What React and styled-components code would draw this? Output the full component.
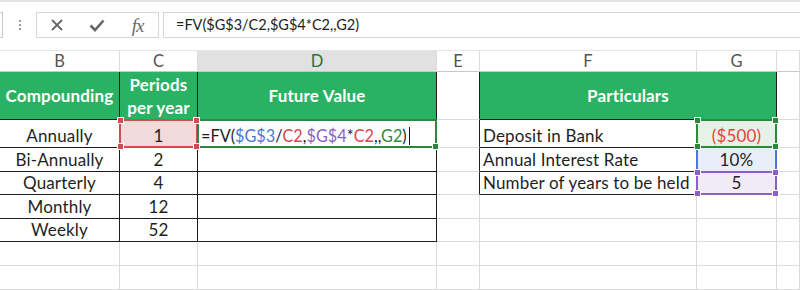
import React from 'react';
import styled, { createGlobalStyle, css } from 'styled-components';

const GRID = '#dadada';
const LINE = '#1e1e1e';
const GREEN = '#2ab264';

const GlobalStyle = createGlobalStyle`
  html, body { margin: 0; padding: 0; background: #fff; }
  body { font-family: Lato, "Noto Sans", sans-serif; overflow: hidden; }
`;

const Window = styled.div`
  width: 800px;
  height: 290px;
  overflow: hidden;
  box-sizing: border-box;
  border-top: 2px solid #e2e2e2;
  background: #fff;
`;

const FormulaBar = styled.div`
  display: flex;
  height: 26px;
  margin-top: 10px;
`;

const NameBoxEdge = styled.div`
  width: 3px;
  box-sizing: border-box;
  border: 1px solid #c9c9c9;
  border-left: none;
`;

const Grip = styled.div`
  width: 33px;
  display: flex;
  flex-direction: column;
  align-items: center;
  justify-content: center;
  gap: 2px;
  span {
    width: 2px;
    height: 2px;
    background: #9a9a9a;
  }
`;

const ButtonsBox = styled.div`
  width: 123px;
  box-sizing: border-box;
  border: 1px solid #d6d6d6;
  display: grid;
  grid-template-columns: 40px 40px 41px;
  align-items: center;
  justify-items: center;
`;

const FxLabel = styled.span`
  font-family: "Liberation Serif", "DejaVu Serif", serif;
  font-style: italic;
  font-size: 19px;
  color: #6a6a6a;
  letter-spacing: -1px;
  line-height: 1;
`;

const FormulaInput = styled.div`
  flex: 1;
  margin-left: 4px;
  box-sizing: border-box;
  border: 1px solid #d6d6d6;
  border-right: none;
  padding-left: 12px;
  font-size: 14.5px;
  line-height: 24px;
  color: #222;
  white-space: nowrap;
`;

const Sheet = styled.div`
  margin-top: 12px;
  display: grid;
  grid-template-columns: 120px 78px 239px 43px 217px 80px 23px;
  grid-template-rows: 22px 48px 28px 24px 23px 24px 23px 24px 24px;
`;

const ColHead = styled.div`
  box-sizing: border-box;
  display: flex;
  align-items: center;
  justify-content: center;
  border-top: 1px solid #e6e6e6;
  border-right: 1px solid #dcdcdc;
  border-bottom: 1px solid #c8c8c8;
  font-size: 16.5px;
  color: ${p => (p.$selected ? '#217346' : '#555')};
  background: ${p => (p.$selected ? '#e1e1e1' : '#fff')};
`;

const Cell = styled.div`
  position: relative;
  box-sizing: border-box;
  display: flex;
  align-items: flex-end;
  justify-content: ${p => (p.$align === 'left' ? 'flex-start' : 'center')};
  padding: ${p => (p.$align === 'left' ? '0 0 1px 3px' : '0 0 1px 0')};
  border-right: 1px solid ${p => p.$r || GRID};
  border-bottom: 1px solid ${p => p.$b || GRID};
  background: ${p => p.$fill || 'transparent'};
  color: ${p => p.$color || '#1f1f1f'};
  font-size: 17px;
  letter-spacing: 0.15px;
  line-height: 21px;
  white-space: nowrap;
  ${p => p.$span && css`grid-column: span ${p.$span};`}
`;

const HeadCell = styled(Cell)`
  align-items: center;
  justify-content: center;
  padding: 0;
  background: ${GREEN};
  color: #fff;
  font-weight: 700;
  text-align: center;
  line-height: 23px;
`;

const Selection = styled.div`
  position: absolute;
  top: -1px;
  left: -1px;
  right: -1px;
  bottom: -1px;
  z-index: 2;
  pointer-events: none;
  border: 2px solid ${p => p.$c};
  ${p => p.$sides === 'lr' && css`border-top: none; border-bottom: none; top: 0; bottom: 0;`}
`;

const Handle = styled.span`
  position: absolute;
  z-index: 3;
  width: 5px;
  height: 5px;
  background: ${p => p.$c};
  border: 1px solid #fff;
  ${p => (p.$v === 't' ? 'top: -3px;' : 'bottom: -3px;')}
  ${p => (p.$h === 'l' ? 'left: -3px;' : 'right: -3px;')}
`;

const Ref = styled.span`
  color: ${p => p.$c};
`;

const Caret = styled.span`
  display: inline-block;
  width: 1px;
  height: 18px;
  margin-left: 2px;
  background: #111;
  vertical-align: -3px;
`;

const FormulaCell = styled(Cell)`
  font-size: 16.3px;
  letter-spacing: 0;
`;

const SelectBox = ({ c, sides, handles = ['tl', 'tr', 'bl', 'br'] }) => (
  <>
    <Selection $c={c} $sides={sides} />
    {handles.map(h => (
      <Handle key={h} $c={c} $v={h[0]} $h={h[1]} />
    ))}
  </>
);

const XIcon = () => (
  <svg width="14" height="14" viewBox="0 0 14 14">
    <path d="M2 2 L12 12 M12 2 L2 12" stroke="#666" strokeWidth="1.8" fill="none" />
  </svg>
);

const CheckIcon = () => (
  <svg width="16" height="14" viewBox="0 0 16 14">
    <path d="M1.5 7.5 L6 12 L14.5 2.5" stroke="#666" strokeWidth="2.6" fill="none" strokeLinejoin="miter" />
  </svg>
);

const leftRows = [
  ['Annually', '1'],
  ['Bi-Annually', '2'],
  ['Quarterly', '4'],
  ['Monthly', '12'],
  ['Weekly', '52'],
];

const C_BLUE = '#4a78d4';
const C_RED = '#d9474c';
const C_PURPLE = '#8a5fc6';
const C_GREEN = '#2f8a3e';

export default function App() {
  return (
    <Window>
      <GlobalStyle />
      <FormulaBar>
        <NameBoxEdge />
        <Grip>
          <span />
          <span />
          <span />
        </Grip>
        <ButtonsBox>
          <XIcon />
          <CheckIcon />
          <FxLabel>fx</FxLabel>
        </ButtonsBox>
        <FormulaInput>=FV($G$3/C2,$G$4*C2,,G2)</FormulaInput>
      </FormulaBar>

      <Sheet>
        <ColHead>B</ColHead>
        <ColHead>C</ColHead>
        <ColHead $selected>D</ColHead>
        <ColHead>E</ColHead>
        <ColHead>F</ColHead>
        <ColHead>G</ColHead>
        <ColHead />

        <HeadCell $r={LINE} $b={LINE}>Compounding</HeadCell>
        <HeadCell $r={LINE} $b={LINE}>
          Periods
          <br />
          per year
        </HeadCell>
        <HeadCell $r={LINE} $b={LINE}>Future Value</HeadCell>
        <Cell $r={LINE} />
        <HeadCell $span={2} $r={LINE} $b={LINE}>Particulars</HeadCell>
        <Cell />

        <Cell $r={LINE} $b={LINE}>{leftRows[0][0]}</Cell>
        <Cell $r={LINE} $b={LINE} $fill="#f3dada">
          {leftRows[0][1]}
          <SelectBox c="#cf4c50" />
        </Cell>
        <FormulaCell $r={LINE} $b={LINE} $align="left">
          <span>
            =FV(<Ref $c={C_BLUE}>$G$3</Ref>/<Ref $c={C_RED}>C2</Ref>,<Ref $c={C_PURPLE}>$G$4</Ref>*
            <Ref $c={C_RED}>C2</Ref>,,<Ref $c={C_GREEN}>G2</Ref>)
            <Caret />
          </span>
          <SelectBox c="#2e8540" handles={['br']} />
        </FormulaCell>
        <Cell $r={LINE} />
        <Cell $r={LINE} $b={LINE} $align="left">Deposit in Bank</Cell>
        <Cell $r={LINE} $b={LINE} $fill="#e6f2e7" $color="#e8423e">
          ($500)
          <SelectBox c="#2a8a3a" />
        </Cell>
        <Cell />

        <Cell $r={LINE} $b={LINE}>{leftRows[1][0]}</Cell>
        <Cell $r={LINE} $b={LINE}>{leftRows[1][1]}</Cell>
        <Cell $r={LINE} $b={LINE} />
        <Cell $r={LINE} />
        <Cell $r={LINE} $b={LINE} $align="left">Annual Interest Rate</Cell>
        <Cell $r={LINE} $b={LINE} $fill="#e8eef9">
          10%
          <SelectBox c="#4a78d4" sides="lr" handles={[]} />
        </Cell>
        <Cell />

        <Cell $r={LINE} $b={LINE}>{leftRows[2][0]}</Cell>
        <Cell $r={LINE} $b={LINE}>{leftRows[2][1]}</Cell>
        <Cell $r={LINE} $b={LINE} />
        <Cell $r={LINE} />
        <Cell $r={LINE} $b={LINE} $align="left">Number of years to be held</Cell>
        <Cell $r={LINE} $b={LINE} $fill="#f0ebf6">
          5
          <SelectBox c="#8a5fc6" />
        </Cell>
        <Cell />

        {leftRows.slice(3).map(([label, n]) => (
          <React.Fragment key={label}>
            <Cell $r={LINE} $b={LINE}>{label}</Cell>
            <Cell $r={LINE} $b={LINE}>{n}</Cell>
            <Cell $r={LINE} $b={LINE} />
            <Cell />
            <Cell />
            <Cell />
            <Cell />
          </React.Fragment>
        ))}

        {[7, 8].map(r => (
          <React.Fragment key={r}>
            <Cell />
            <Cell />
            <Cell />
            <Cell />
            <Cell />
            <Cell />
            <Cell />
          </React.Fragment>
        ))}
      </Sheet>
    </Window>
  );
}
